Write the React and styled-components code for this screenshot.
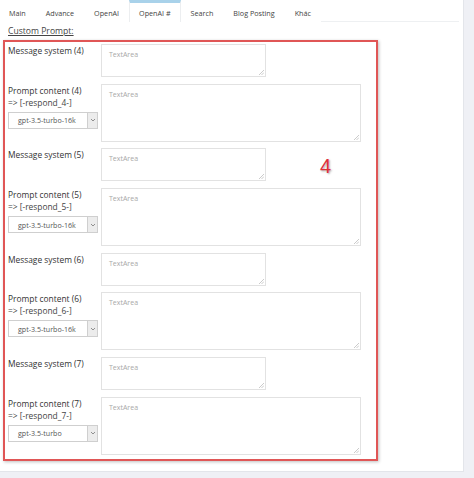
import React from "react";
import styled, { createGlobalStyle } from "styled-components";

const Global = createGlobalStyle`
  html, body { margin: 0; padding: 0; background: #eff0f5; }
  body { font-family: "Open Sans", "Noto Sans", sans-serif; color: #333; }
  * { box-sizing: border-box; }
`;

const Panel = styled.div`
  width: 464px;
  height: 472px;
  background: #fff;
  border-right: 1px solid #e3e5ea;
  border-bottom: 1px solid #e3e5ea;
  position: relative;
`;

const Tabs = styled.div`
  display: flex;
  height: 22px;
  border-bottom: 1px solid #eef0f2;
  margin-right: 4px;
`;

const Tab = styled.div`
  padding: 1px 9px 0;
  font-size: 7.2px;
  line-height: 18px;
  color: #444;
  white-space: nowrap;
  border-top: 3px solid ${(p) => (p.$active ? "#a9d2ea" : "transparent")};
  border-left: 1px solid ${(p) => (p.$active ? "#eceef0" : "transparent")};
  border-right: 1px solid ${(p) => (p.$active ? "#eceef0" : "transparent")};
  background: #fff;
  margin-bottom: -1px;
  &:first-child { padding-left: 8px; }
`;

const Title = styled.div`
  font-size: 8.6px;
  color: #444;
  text-decoration: underline;
  padding: 3px 0 0 8px;
  height: 18px;
  line-height: 12px;
`;

const Highlight = styled.div`
  margin-left: 3px;
  width: 375px;
  height: 421px;
  border: 2px solid #e05656;
  box-shadow: 1px 1px 3px rgba(0, 0, 0, 0.25);
  padding: 2px 0 0 3px;
  display: flex;
  flex-direction: column;
  gap: 6.7px;
  position: relative;
`;

const Row = styled.div`
  display: grid;
  grid-template-columns: 90px auto;
  column-gap: 3px;
  align-items: start;
`;

const Label = styled.div`
  font-size: 8.4px;
  line-height: 12px;
  color: #333;
  padding-top: 1px;
`;

const Sub = styled.div`
  font-size: 8.4px;
  line-height: 12px;
  color: #444;
`;

const Area = styled.div`
  width: ${(p) => p.$w}px;
  height: ${(p) => p.$h}px;
  border: 1px solid #e2e2e2;
  background: #fff;
  position: relative;
  padding: 5px 7px;
  font-size: 7px;
  color: #a8a8a8;
`;

const Grip = styled.svg`
  position: absolute;
  right: 1px;
  bottom: 1px;
`;

const Select = styled.div`
  margin-top: 3px;
  width: 90px;
  height: 17px;
  border: 1px solid #cfcfcf;
  display: flex;
  align-items: center;
  font-size: 7.1px;
  color: #555;
  background: #fff;
`;

const SelectText = styled.div`
  flex: 1;
  padding-left: 9px;
`;

const Arrow = styled.div`
  width: 10px;
  height: 15px;
  border-left: 1px solid #cfcfcf;
  background: #ececec;
  display: flex;
  align-items: center;
  justify-content: center;
`;

const Badge = styled.div`
  position: absolute;
  left: 315px;
  top: 114px;
  font-size: 20px;
  line-height: 20px;
  color: #e0303a;
  font-family: "Liberation Sans", sans-serif;
  text-shadow: 1px 1px 2px rgba(0, 0, 0, 0.35);
`;

const TextArea = ({ w, h }) => (
  <Area $w={w} $h={h}>
    TextArea
    <Grip width="5" height="5" viewBox="0 0 5 5">
      <path d="M5 0 L0 5 M5 2.5 L2.5 5" stroke="#b5b5b5" strokeWidth="0.7" />
    </Grip>
  </Area>
);

const Chevron = () => (
  <svg width="6" height="4" viewBox="0 0 6 4">
    <path d="M1 1 L3 3 L5 1" stroke="#777" strokeWidth="0.8" fill="none" />
  </svg>
);

const groups = [
  { n: 4, model: "gpt-3.5-turbo-16k" },
  { n: 5, model: "gpt-3.5-turbo-16k" },
  { n: 6, model: "gpt-3.5-turbo-16k" },
  { n: 7, model: "gpt-3.5-turbo" },
];

const tabs = ["Main", "Advance", "OpenAI", "OpenAI #", "Search", "Blog Posting", "Khác"];

export default function App() {
  return (
    <>
      <Global />
      <Panel>
        <Tabs>
          {tabs.map((t) => (
            <Tab key={t} $active={t === "OpenAI #"}>
              {t}
            </Tab>
          ))}
        </Tabs>
        <Title>Custom Prompt:</Title>
        <Highlight>
          {groups.map((g) => (
            <React.Fragment key={g.n}>
              <Row>
                <Label>Message system ({g.n})</Label>
                <TextArea w={165} h={33} />
              </Row>
              <Row>
                <div>
                  <Label>Prompt content ({g.n})</Label>
                  <Sub>=&gt; [-respond_{g.n}-]</Sub>
                  <Select>
                    <SelectText>{g.model}</SelectText>
                    <Arrow>
                      <Chevron />
                    </Arrow>
                  </Select>
                </div>
                <TextArea w={260} h={58} />
              </Row>
            </React.Fragment>
          ))}
          <Badge>4</Badge>
        </Highlight>
      </Panel>
    </>
  );
}
